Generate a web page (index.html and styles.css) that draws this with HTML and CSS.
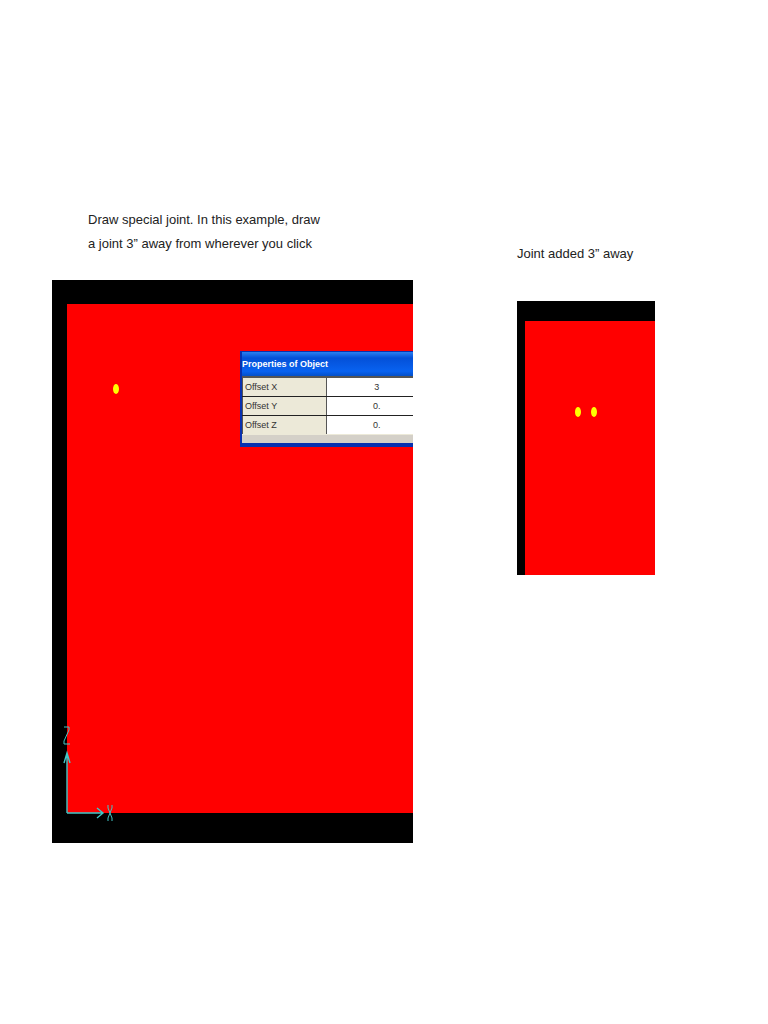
FILE: index.html
```
<!DOCTYPE html>
<html lang="en">
<head>
<meta charset="utf-8">
<title>Draw Special Joint</title>
<link rel="stylesheet" href="styles.css">
</head>
<body>
<main class="slide">
  <section class="step step-draw">
    <p class="caption">Draw special joint. In this example, draw<br>a joint 3” away from wherever you click</p>
    <div class="model">
      <div class="area">
        <svg class="joint joint-start" viewBox="0 0 6 10"><ellipse cx="3" cy="5" rx="3" ry="5"/></svg>
        <div class="dialog">
          <h2 class="dialog-title">Properties of Object</h2>
          <table class="properties">
            <tr>
              <th><label for="offsetX">Offset X</label></th>
              <td><input type="text" id="offsetX" value="3"></td>
            </tr>
            <tr>
              <th><label for="offsetY">Offset Y</label></th>
              <td><input type="text" id="offsetY" value="0."></td>
            </tr>
            <tr>
              <th><label for="offsetZ">Offset Z</label></th>
              <td><input type="text" id="offsetZ" value="0."></td>
            </tr>
          </table>
        </div>
        <svg class="axes" viewBox="0 0 56 92">
          <path d="M6 86V28M3 36L6 26L9 36M6 86H41M36 81L42 86L36 91"/>
          <path class="axis-name" d="M3 0H8V3L3 14V17H9M47 78V81L51 91V94M51 78V81L47 91V94"/>
        </svg>
      </div>
    </div>
  </section>
  <section class="step step-result">
    <p class="caption">Joint added 3” away</p>
    <div class="model">
      <div class="area">
        <svg class="joint joint-first" viewBox="0 0 6 10"><ellipse cx="3" cy="5" rx="3" ry="5"/></svg>
        <svg class="joint joint-second" viewBox="0 0 6 10"><ellipse cx="3" cy="5" rx="3" ry="5"/></svg>
      </div>
    </div>
  </section>
</main>
</body>
</html>
```
FILE: styles.css
```
body {
  margin: 0;
  background-color: white;
  color: #222;
  font-family: "Liberation Sans Narrow", "Liberation Sans", sans-serif;
}

.slide {
  display: grid;
  grid-template-columns: minmax(0, 361fr) minmax(0, 138fr);
  column-gap: 104px;
  align-items: start;
  padding: 208px 113px 0 52px;
}

.caption {
  margin: 0;
  font-size: 13px;
  line-height: 24px;
  white-space: nowrap;
}

.model {
  box-sizing: border-box;
  display: flex;
  background-color: black;
}

.area {
  position: relative;
  flex: 1;
  background-color: red;
}

.step-draw .caption {
  padding: 0 36px 24px;
}

.step-draw .model {
  aspect-ratio: 361 / 563;
  padding: 24px 0 30px 15px;
}

.step-result {
  padding-top: 34px;
}

.step-result .caption {
  padding-bottom: 35px;
}

.step-result .model {
  aspect-ratio: 138 / 274;
  padding: 20px 0 0 8px;
}

.joint {
  position: absolute;
  width: 6px;
  height: 10px;
  fill: yellow;
}

.joint-start {
  left: 46px;
  top: 80px;
}

.joint-first {
  left: 50px;
  top: 86px;
}

.joint-second {
  left: 66px;
  top: 86px;
}

.axes {
  position: absolute;
  left: -6px;
  bottom: -6px;
  width: 56px;
  height: 92px;
  overflow: visible;
  fill: none;
  stroke: #40c8c8;
  stroke-width: 1.4;
}

.axis-name {
  stroke-width: 1;
}

.dialog {
  position: absolute;
  top: 47px;
  left: 50%;
  right: 0;
  padding-bottom: 8px;
  background-color: #d4d0c8;
  border: 1px solid #0831b0;
  border-width: 1px 0 4px 2px;
}

.dialog-title {
  margin: 0;
  background: linear-gradient(#2a80f0, #0450d8 25%, #0862f0 80%, #0450c8);
  color: white;
  font-size: 9px;
  line-height: 24px;
}

.properties {
  width: 100%;
  table-layout: fixed;
  border-collapse: collapse;
  border: 1px solid #555;
  border-width: 2px 0 0 1px;
  font-size: 9px;
}

.properties th,
.properties td {
  height: 18px;
  padding: 0;
  border-bottom: 1px solid #222;
  line-height: 18px;
}

.properties th {
  width: 49%;
  padding-left: 2px;
  box-sizing: border-box;
  background-color: #ece9d8;
  border-right: 1px solid #555;
  color: #333;
  font-weight: normal;
  text-align: left;
}

.properties td {
  background-color: white;
}

.properties tr:last-child th,
.properties tr:last-child td {
  border-bottom-color: #ece9d8;
}

.properties input {
  display: block;
  box-sizing: border-box;
  width: 100%;
  height: 18px;
  padding: 0 0 0 14px;
  border: none;
  background: none;
  color: #333;
  font: inherit;
  text-align: center;
}
```
